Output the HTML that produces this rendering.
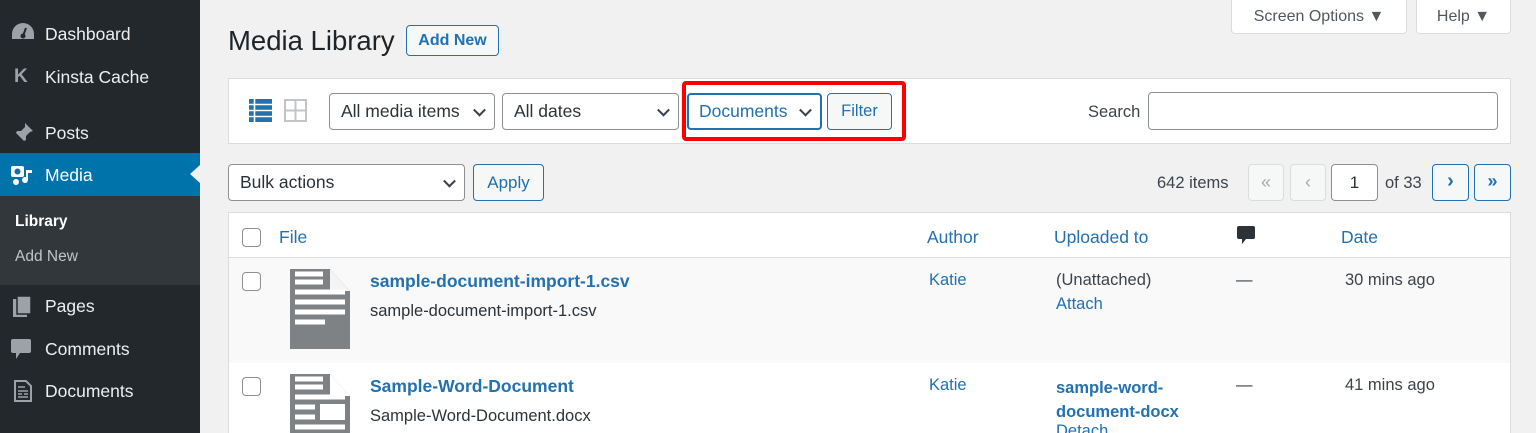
<!DOCTYPE html>
<html><head><style>
*{box-sizing:border-box;margin:0;padding:0}
html,body{width:1536px;height:433px;overflow:hidden}
body{background:#f1f1f1;font-family:"Liberation Sans",sans-serif;position:relative;color:#3c434a}
.a{position:absolute;white-space:nowrap}
#sb{position:absolute;left:0;top:0;width:200px;height:433px;background:#23282d}
.mi{position:absolute;left:45px;font-size:17.5px;color:#eee}
.ic{position:absolute;left:11px}
.box{position:absolute;background:#fff;border:1px solid #8c8f94;border-radius:4px;font-size:17.5px;color:#2c3338;padding-left:11px}
.btn{position:absolute;background:#f6f7f7;border:1px solid #2271b1;border-radius:4px;color:#2271b1;font-size:16.5px;text-align:center}
.chev{position:absolute;right:10px;top:50%;width:9px;height:9px;border-right:2px solid #3c434a;border-bottom:2px solid #3c434a;transform:translateY(-70%) rotate(45deg)}
.blue{color:#2271b1}
.cb{position:absolute;width:19px;height:19px;border:1.5px solid #8c8f94;border-radius:4px;background:#fff}
.t{font-size:16.5px}
</style></head><body>
<div id="sb">
 <div class="a" style="left:0;top:153px;width:200px;height:43px;background:#0073aa"></div>
 <div class="a" style="left:190px;top:165px;width:0;height:0;border-top:9px solid transparent;border-bottom:9px solid transparent;border-right:10px solid #f1f1f1"></div>
 <div class="a" style="left:0;top:196px;width:200px;height:89px;background:#32373c"></div>
 <svg class="ic" style="top:22px" width="24" height="20" viewBox="0 0 24 20"><path d="M12 1A11 11 0 0 0 1 12v5h22v-5A11 11 0 0 0 12 1z" fill="#9ca2a7"/><path d="M12 14l3-8" stroke="#23282d" stroke-width="2"/><circle cx="12" cy="14" r="2.5" fill="#23282d"/></svg>
 <div class="mi" style="top:24px">Dashboard</div>
 <div class="a" style="left:14px;top:66px;font-size:19px;font-weight:bold;color:#9ca2a7">K</div>
 <div class="mi" style="top:67px">Kinsta Cache</div>
 <svg class="ic" style="top:121px" width="24" height="24" viewBox="0 0 24 24"><path d="M14 2l8 8-3 1-4 4 0 4-2 1-4-4-6 7 6-7-4-4 1-2 4 0 4-4z" fill="#9ca2a7"/></svg>
 <div class="mi" style="top:123px">Posts</div>
 <svg class="ic" style="top:164px" width="24" height="22" viewBox="0 0 24 22"><rect x="0" y="2" width="13" height="11" rx="2" fill="#fff"/><circle cx="6.5" cy="7.5" r="3" fill="#0073aa"/><path d="M17 6v10a3 3 0 1 1-2-2.8V6h6v3h-4" fill="#fff"/><circle cx="5" cy="18" r="3" fill="#fff"/></svg>
 <div class="mi" style="top:165px;color:#fff">Media</div>
 <div class="a" style="left:15px;top:213px;font-size:15.5px;font-weight:bold;color:#fff">Library</div>
 <div class="a" style="left:15px;top:248px;font-size:15.5px;color:#c3c4c7">Add New</div>
 <svg class="ic" style="top:295px" width="22" height="24" viewBox="0 0 22 24"><rect x="2" y="4" width="14" height="18" fill="#9ca2a7"/><rect x="6" y="1" width="14" height="18" fill="#9ca2a7" stroke="#23282d" stroke-width="1.5"/></svg>
 <div class="mi" style="top:296px">Pages</div>
 <svg class="ic" style="top:338px" width="22" height="24" viewBox="0 0 22 24"><path d="M2 1h16a2 2 0 0 1 2 2v10a2 2 0 0 1-2 2h-9l-4 6v-6H2a2 2 0 0 1-2-2V3a2 2 0 0 1 2-2z" fill="#9ca2a7"/></svg>
 <div class="mi" style="top:339px">Comments</div>
 <svg class="ic" style="top:380px;left:14px" width="18" height="22" viewBox="0 0 18 22"><path d="M1 1h11l5 5v15H1z" fill="none" stroke="#9ca2a7" stroke-width="2"/><path d="M4 7h7M4 11h10M4 14h4M10 14h4M4 17h10" stroke="#9ca2a7" stroke-width="1.5"/></svg>
 <div class="mi" style="top:381px">Documents</div>
</div>

<div class="a" style="left:228px;top:25px;font-size:27.5px;color:#1d2327">Media Library</div>
<div class="btn" style="left:406px;top:25px;width:93px;height:31px;line-height:29px;font-weight:bold;font-size:16px">Add New</div>
<div class="a" style="left:1231px;top:0;width:176px;height:34px;background:#fff;border:1px solid #dcdcde;border-top:0;border-radius:0 0 4px 4px;font-size:16px;color:#50575e;text-align:center;line-height:33px">Screen Options ▼</div>
<div class="a" style="left:1416px;top:0;width:95px;height:34px;background:#fff;border:1px solid #dcdcde;border-top:0;border-radius:0 0 4px 4px;font-size:16px;color:#50575e;text-align:center;line-height:33px">Help ▼</div>

<div class="a" style="left:228px;top:78px;width:1283px;height:66px;background:#fff;border:1px solid #dcdcde"></div>
<svg class="a" style="left:249px;top:99px" width="23" height="23" viewBox="0 0 23 23"><rect x="0" y="0" width="23" height="23" fill="#2271b1"/><path d="M0 5.5h23M0 11.5h23M0 17.5h23M5.5 0v23" stroke="#fff" stroke-width="1.6"/></svg>
<svg class="a" style="left:284px;top:99px" width="23" height="23" viewBox="0 0 23 23"><rect x="1" y="1" width="21" height="21" fill="none" stroke="#c3c4c7" stroke-width="2"/><path d="M11.5 0v23M0 11.5h23" stroke="#c3c4c7" stroke-width="2"/></svg>
<div class="box" style="left:329px;top:93px;width:166px;height:37px;line-height:35px">All media items<span class="chev"></span></div>
<div class="box" style="left:502px;top:93px;width:177px;height:37px;line-height:35px">All dates<span class="chev"></span></div>
<div class="box" style="left:687px;top:93px;width:135px;height:37px;line-height:33px;border:2px solid #2271b1;color:#2271b1;padding-left:10px">Documents<span class="chev"></span></div>
<div class="btn" style="left:827px;top:93px;width:65px;height:37px;line-height:35px">Filter</div>
<div class="a" style="left:682px;top:81px;width:224px;height:60px;border:4px solid #f00;border-radius:4px"></div>
<div class="a t" style="left:1088px;top:103px">Search</div>
<div class="box" style="left:1148px;top:92px;width:350px;height:38px"></div>

<div class="box" style="left:228px;top:164px;width:237px;height:37px;line-height:35px">Bulk actions<span class="chev"></span></div>
<div class="btn" style="left:473px;top:164px;width:71px;height:37px;line-height:35px;font-size:17px">Apply</div>
<div class="a t" style="left:1157px;top:174px">642 items</div>
<div class="a" style="left:1248px;top:164px;width:36px;height:37px;border:1px solid #dcdcde;border-radius:4px;background:#f6f7f7;color:#a7aaad;text-align:center;line-height:34px;font-size:18px">«</div>
<div class="a" style="left:1290px;top:164px;width:36px;height:37px;border:1px solid #dcdcde;border-radius:4px;background:#f6f7f7;color:#a7aaad;text-align:center;line-height:34px;font-size:18px">‹</div>
<div class="a" style="left:1331px;top:164px;width:47px;height:37px;border:1px solid #8c8f94;border-radius:4px;background:#fff;text-align:center;line-height:35px;font-size:17px;color:#2c3338">1</div>
<div class="a t" style="left:1385px;top:174px">of 33</div>
<div class="btn" style="left:1432px;top:164px;width:37px;height:37px;line-height:33px;font-size:20px;font-weight:bold">›</div>
<div class="btn" style="left:1474px;top:164px;width:37px;height:37px;line-height:33px;font-size:18px;font-weight:bold">»</div>

<div class="a" style="left:228px;top:212px;width:1283px;height:260px;background:#fff;border:1px solid #dcdcde"></div>
<div class="a" style="left:229px;top:257px;width:1281px;height:1px;background:#dcdcde"></div>
<div class="a" style="left:229px;top:258px;width:1281px;height:105px;background:#f9f9f9"></div>
<div class="cb" style="left:242px;top:228px"></div>
<div class="a blue" style="left:279px;top:227px;font-size:17.5px">File</div>
<div class="a blue" style="left:927px;top:227px;font-size:17.5px">Author</div>
<div class="a blue" style="left:1054px;top:227px;font-size:17.5px">Uploaded to</div>
<svg class="a" style="left:1237px;top:226px" width="18" height="20" viewBox="0 0 18 20"><path d="M2 0h14a2 2 0 0 1 2 2v9a2 2 0 0 1-2 2H9l-4 5v-5H2a2 2 0 0 1-2-2V2a2 2 0 0 1 2-2z" fill="#2c3338"/></svg>
<div class="a blue" style="left:1341px;top:227px;font-size:17.5px">Date</div>

<div class="cb" style="left:242px;top:272px"></div>
<svg class="a" style="left:289px;top:268px" width="62" height="82" viewBox="0 0 62 82"><path d="M1 1h40l20 22v58H1z" fill="#7e8285"/><path d="M41 1v22h20z" fill="#f4f4f4"/><path d="M6 6h28M6 14h28M6 24h50M6 34h50M6 44h50M6 54h30" stroke="#fff" stroke-width="5"/></svg>
<div class="a blue" style="left:370px;top:271px;font-size:17.5px;font-weight:bold">sample-document-import-1.csv</div>
<div class="a t" style="left:370px;top:302px;color:#2c3338">sample-document-import-1.csv</div>
<div class="a blue t" style="left:929px;top:271px">Katie</div>
<div class="a t" style="left:1056px;top:271px">(Unattached)</div>
<div class="a blue t" style="left:1056px;top:295px">Attach</div>
<div class="a t" style="left:1236px;top:271px">—</div>
<div class="a t" style="left:1345px;top:271px">30 mins ago</div>

<div class="cb" style="left:242px;top:377px"></div>
<svg class="a" style="left:289px;top:373px" width="62" height="70" viewBox="0 0 62 70"><path d="M1 1h40l20 22v58H1z" fill="#7e8285"/><path d="M41 1v22h20z" fill="#fff"/><path d="M6 6h28M6 14h28M6 24h50M6 34h20M6 44h20M6 54h50" stroke="#fff" stroke-width="5"/><rect x="31" y="31" width="25" height="16" fill="#fff"/></svg>
<div class="a blue" style="left:370px;top:376px;font-size:17.5px;font-weight:bold">Sample-Word-Document</div>
<div class="a t" style="left:370px;top:407px;color:#2c3338">Sample-Word-Document.docx</div>
<div class="a blue t" style="left:929px;top:376px">Katie</div>
<div class="a blue t" style="left:1056px;top:376px;font-weight:bold;line-height:24px">sample-word-<br>document-docx</div>
<div class="a blue t" style="left:1056px;top:422px">Detach</div>
<div class="a t" style="left:1236px;top:376px">—</div>
<div class="a t" style="left:1345px;top:376px">41 mins ago</div>
</body></html>
